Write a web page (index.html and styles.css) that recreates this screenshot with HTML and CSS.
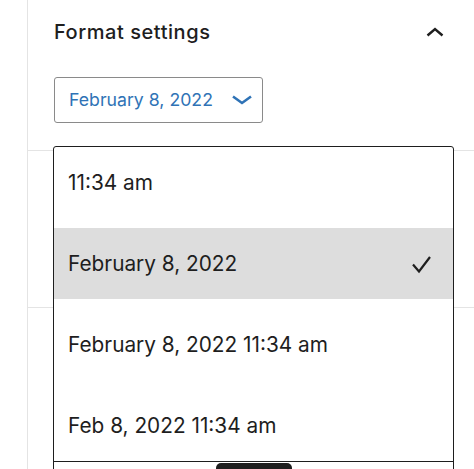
FILE: index.html
```html
<!DOCTYPE html>
<html lang="en">
<head>
<meta charset="utf-8">
<title>Format settings</title>
<link rel="stylesheet" href="styles.css">
</head>
<body>
<div class="sidebar">
  <section class="section section-first">
    <div class="panel-header">
      <h2 class="panel-title">Format settings</h2>
      <svg class="chev-up" width="24" height="24" viewBox="0 0 24 24" aria-hidden="true"><polyline points="4.5,15.5 12,9 19.5,15.5" fill="none" stroke="#1e1e1e" stroke-width="2.4"/></svg>
    </div>
    <button class="format-toggle" type="button">
      <span>February 8, 2022</span>
      <svg width="22" height="12" viewBox="0 0 22 12" aria-hidden="true"><polyline points="2,2.5 11,9 20,2.5" fill="none" stroke="#2f73b6" stroke-width="2.6"/></svg>
    </button>
  </section>
  <section class="section section-mid"></section>
  <section class="section section-last"></section>

  <div class="popover" role="listbox">
    <ul class="menu">
      <li class="menu-item">11:34 am</li>
      <li class="menu-item is-selected">February 8, 2022
        <svg class="check" width="20" height="20" viewBox="0 0 20 20" aria-hidden="true"><polyline points="2,10.5 8,17.5 19,3" fill="none" stroke="#1e1e1e" stroke-width="2.2"/></svg>
      </li>
      <li class="menu-item">February 8, 2022 11:34 am</li>
      <li class="menu-item">Feb 8, 2022 11:34 am</li>
    </ul>
    <div class="popover-footer"><span class="pill"></span></div>
  </div>
</div>
</body>
</html>
```

FILE: styles.css
```css
html, body {
  margin: 0;
  padding: 0;
  background: #ffffff;
  overflow: hidden;
}

body {
  width: 474px;
  height: 469px;
  font-family: Inter, "Noto Sans", "Liberation Sans", sans-serif;
  color: #1e1e1e;
}

.sidebar {
  position: relative;
  margin-left: 27px;
  height: 469px;
  border-left: 1px solid #e4e4e4;
}

.section {
  box-sizing: border-box;
  border-bottom: 1px solid #e4e4e4;
}

.section-first {
  height: 151px;
  padding: 20px 0 0 26px;
}

.section-mid {
  height: 157px;
}

.section-last {
  border-bottom: none;
}

.panel-header {
  display: flex;
  align-items: center;
  justify-content: space-between;
  height: 24px;
  padding-right: 27px;
}

.panel-title {
  margin: 0;
  font-size: 20px;
  font-weight: 500;
  line-height: 24px;
  letter-spacing: 0.55px;
}

.chev-up {
  display: block;
}

.format-toggle {
  display: flex;
  align-items: center;
  gap: 18px;
  box-sizing: border-box;
  margin-top: 33px;
  height: 46px;
  width: 209px;
  padding: 0 0 0 14px;
  border: 1px solid #8a8a8a;
  border-radius: 3px;
  background: #ffffff;
  color: #2f73b6;
  font-family: inherit;
  font-size: 17.7px;
  line-height: 22px;
}

.popover {
  position: absolute;
  top: 146px;
  left: 25px;
  width: 401px;
  height: 340px;
  box-sizing: border-box;
  border: 1.5px solid #1e1e1e;
  border-radius: 3px;
  background: #ffffff;
}

.menu {
  list-style: none;
  margin: 0;
  padding: 0;
  display: flex;
  flex-direction: column;
  gap: 10px;
  border-bottom: 1.5px solid #1e1e1e;
}

.menu-item {
  display: flex;
  align-items: center;
  justify-content: space-between;
  height: 71px;
  padding: 0 22px 0 14px;
  font-size: 20.8px;
  line-height: 24px;
}

.menu-item.is-selected {
  background: #dddddd;
}

.check {
  display: block;
}

.popover-footer {
  display: flex;
  justify-content: center;
  padding-top: 1px;
}

.pill {
  display: block;
  width: 76px;
  height: 20px;
  background: #1e1e1e;
  border-radius: 5px;
}
```
